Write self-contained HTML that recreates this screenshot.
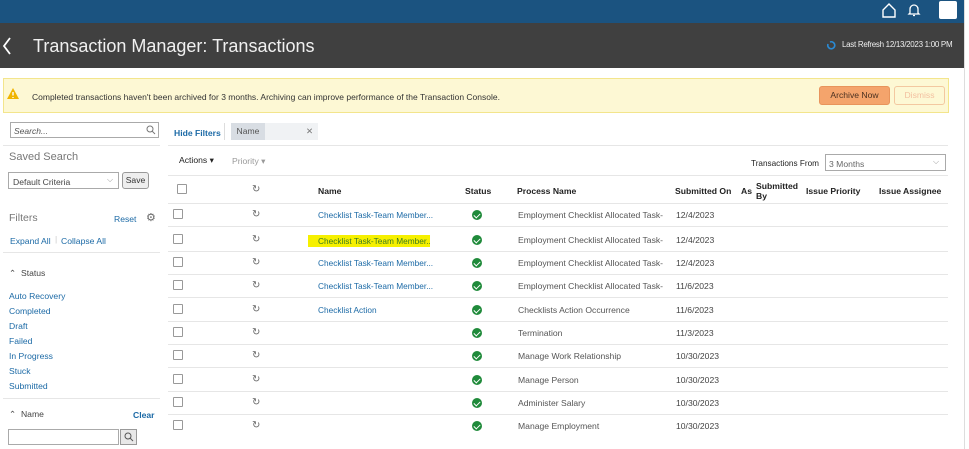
<!DOCTYPE html>
<html><head><style>
*{box-sizing:border-box;margin:0;padding:0}
body{width:969px;height:449px;overflow:hidden;background:#fff;font-family:"Liberation Sans",sans-serif;font-size:8.6px;color:#333;position:relative}
.a{position:absolute;white-space:nowrap}
.lnk{color:#1c6aa6}
.cb{position:absolute;width:10px;height:10px;border:1px solid #999;border-radius:1px;background:#fff}
.chk{position:absolute;width:10px;height:10px;border-radius:50%;background:#1f8a3a}
.chk:after{content:"";position:absolute;left:3px;top:2px;width:3px;height:5px;border:solid #fff;border-width:0 1.5px 1.5px 0;transform:rotate(45deg)}
.rl{position:absolute;left:168px;width:780px;height:1px;background:#e6e6e6}
.hd{font-weight:bold;color:#222;font-size:8.6px}
</style></head><body>
<div class="a" style="left:0;top:0;width:964px;height:23px;background:#1b5380"></div>
<div class="a" style="left:0;top:23px;width:964px;height:45px;background:#404040"></div>
<div class="a" style="left:964px;top:0;width:5px;height:449px;background:#fff;border-left:1px solid #ddd"></div>
<svg class="a" style="left:881px;top:2px" width="16" height="16" viewBox="0 0 16 16"><path d="M2 8 L8 2 L14 8 V15 H2 Z" fill="none" stroke="#fff" stroke-width="1.4"/></svg>
<svg class="a" style="left:907px;top:2px" width="14" height="16" viewBox="0 0 14 16"><path d="M3 11 V7 a4 4 0 0 1 8 0 V11 L12 12 H2 Z M6 13.5 h2" fill="none" stroke="#fff" stroke-width="1.3"/></svg>
<div class="a" style="left:939px;top:1px;width:18px;height:18px;background:#fff;border-radius:2px"></div>
<svg class="a" style="left:2px;top:37px" width="10" height="18" viewBox="0 0 10 18"><path d="M8 1 L2 9 L8 17" fill="none" stroke="#fff" stroke-width="1.8"/></svg>
<div class="a" style="left:33px;top:36px;font-size:18px;color:#f0f0f0">Transaction Manager: Transactions</div>
<svg class="a" style="left:826px;top:40px" width="10" height="10" viewBox="0 0 10 10"><path d="M2 4 a3.5 3.5 0 1 0 2-2" fill="none" stroke="#2a8ad4" stroke-width="1.6"/></svg>
<div class="a" style="left:842px;top:40px;color:#eee;font-size:8px;letter-spacing:-0.3px">Last Refresh 12/13/2023 1:00 PM</div>
<div class="a" style="left:3px;top:78px;width:946px;height:35px;background:#fdf8d4;border:1px solid #f3e58c"></div>
<svg class="a" style="left:6px;top:87px" width="14" height="13" viewBox="0 0 14 13"><path d="M7 1 L13 12 H1 Z" fill="#f0b400"/><path d="M7 5 v3.5 M7 10 v1" stroke="#fff" stroke-width="1.4"/></svg>
<div class="a" style="left:32px;top:92px;font-size:8.5px;color:#333">Completed transactions haven't been archived for 3 months. Archiving can improve performance of the Transaction Console.</div>
<div class="a" style="left:819px;top:86px;width:71px;height:19px;background:#f4a46c;border:1px solid #e8945c;border-radius:3px;text-align:center;line-height:17px;color:#4a3020">Archive Now</div>
<div class="a" style="left:894px;top:86px;width:51px;height:19px;border:1px solid #f3c8a0;border-radius:3px;text-align:center;line-height:17px;color:#f3c0a0">Dismiss</div>
<div class="a" style="left:10px;top:122px;width:149px;height:16px;border:1px solid #aaa;background:#fff"></div>
<div class="a" style="left:14px;top:126px;font-style:italic;color:#555;font-size:8.5px">Search...</div>
<svg class="a" style="left:146px;top:125px" width="10" height="10" viewBox="0 0 10 10"><circle cx="4" cy="4" r="3" fill="none" stroke="#777"/><path d="M6 6 L9 9" stroke="#777"/></svg>
<div class="a" style="left:3px;top:145px;width:157px;height:1px;background:#e6e6e6"></div>
<div class="a" style="left:9px;top:151px;font-size:11px;color:#777">Saved Search</div>
<div class="a" style="left:8px;top:172px;width:111px;height:17px;border:1px solid #aaa"></div>
<div class="a" style="left:13px;top:177px;color:#444">Default Criteria</div>
<div class="a" style="left:107px;top:175px;color:#999;font-size:8px">⌵</div>
<div class="a" style="left:122px;top:172px;width:27px;height:17px;border:1px solid #999;border-radius:3px;background:#eee;text-align:center;line-height:15px;color:#333">Save</div>
<div class="a" style="left:9px;top:212px;font-size:10.5px;color:#777">Filters</div>
<div class="a lnk" style="left:114px;top:214px">Reset</div>
<div class="a" style="left:146px;top:211px;color:#666;font-size:11px">⚙</div>
<div class="a lnk" style="left:10px;top:236px">Expand All</div>
<div class="a" style="left:55px;top:234px;color:#ccc">|</div>
<div class="a lnk" style="left:61px;top:236px">Collapse All</div>
<div class="a" style="left:3px;top:252px;width:157px;height:1px;background:#e6e6e6"></div>
<div class="a" style="left:9px;top:268px;color:#444">⌃ &nbsp;Status</div>
<div class="a lnk" style="left:9px;top:291px">Auto Recovery</div>
<div class="a lnk" style="left:9px;top:306px">Completed</div>
<div class="a lnk" style="left:9px;top:321px">Draft</div>
<div class="a lnk" style="left:9px;top:336px">Failed</div>
<div class="a lnk" style="left:9px;top:351px">In Progress</div>
<div class="a lnk" style="left:9px;top:366px">Stuck</div>
<div class="a lnk" style="left:9px;top:381px">Submitted</div>
<div class="a" style="left:3px;top:398px;width:157px;height:1px;background:#e6e6e6"></div>
<div class="a" style="left:9px;top:409px;color:#444">⌃ &nbsp;Name</div>
<div class="a lnk" style="left:133px;top:410px;font-weight:bold">Clear</div>
<div class="a" style="left:8px;top:429px;width:111px;height:16px;border:1px solid #aaa"></div>
<div class="a" style="left:120px;top:429px;width:17px;height:16px;border:1px solid #999;background:#e8e8e8"></div>
<svg class="a" style="left:124px;top:432px" width="10" height="10" viewBox="0 0 10 10"><circle cx="4" cy="4" r="3" fill="none" stroke="#555"/><path d="M6 6 L9 9" stroke="#555"/></svg>
<div class="a lnk" style="left:174px;top:128px;font-weight:bold">Hide Filters</div>
<div class="a" style="left:224px;top:123px;width:1px;height:17px;background:#ddd"></div>
<div class="a" style="left:231px;top:123px;width:87px;height:17px;background:#f0f2f4"></div>
<div class="a" style="left:231px;top:123px;width:34px;height:17px;background:#d8dde3;text-align:center;line-height:17px;color:#555">Name</div>
<div class="a" style="left:306px;top:126px;color:#777">✕</div>
<div class="a" style="left:168px;top:145px;width:780px;height:1px;background:#e6e6e6"></div>
<div class="a" style="left:179px;top:155px;color:#222">Actions ▾</div>
<div class="a" style="left:232px;top:156px;color:#999">Priority ▾</div>
<div class="a" style="left:751px;top:159px;color:#222;font-size:8.2px">Transactions From</div>
<div class="a" style="left:825px;top:154px;width:121px;height:17px;border:1px solid #aaa"></div>
<div class="a" style="left:829px;top:159px;color:#666">3 Months</div>
<div class="a" style="left:933px;top:157px;color:#999;font-size:8px">⌵</div>
<div class="rl" style="top:175px"></div>
<div class="cb" style="left:177px;top:184px"></div>
<div class="a" style="left:252px;top:184px;color:#666;font-size:10px">↻</div>
<div class="a hd" style="left:318px;top:186px">Name</div>
<div class="a hd" style="left:465px;top:186px">Status</div>
<div class="a hd" style="left:517px;top:186px">Process Name</div>
<div class="a hd" style="left:675px;top:186px">Submitted On</div>
<div class="a hd" style="left:741px;top:186px">As</div>
<div class="a hd" style="left:756px;top:181px;line-height:10px">Submitted<br>By</div>
<div class="a hd" style="left:806px;top:186px">Issue Priority</div>
<div class="a hd" style="left:879px;top:186px">Issue Assignee</div>
<div class="rl" style="top:203px"></div>
<div id="rows"></div>
<script>
var r=[["Checklist Task-Team Member...","Employment Checklist Allocated Task-","12/4/2023",1],
["Checklist Task-Team Member...","Employment Checklist Allocated Task-","12/4/2023",1,1],
["Checklist Task-Team Member...","Employment Checklist Allocated Task-","12/4/2023",1],
["Checklist Task-Team Member...","Employment Checklist Allocated Task-","11/6/2023",1],
["Checklist Action","Checklists Action Occurrence","11/6/2023",1],
["","Termination","11/3/2023"],["","Manage Work Relationship","10/30/2023"],
["","Manage Person","10/30/2023"],["","Administer Salary","10/30/2023"],["","Manage Employment","10/30/2023"]];
var ys=[215,240,263,286,310,333,356,380,403,426],h="";
r.forEach(function(x,i){var y=ys[i];
h+='<div class="cb" style="left:173px;top:'+(y-6)+'px"></div><div class="a" style="left:252px;top:'+(y-6)+'px;color:#666;font-size:10px">↻</div>';
if(x[0])h+='<div class="a lnk" style="left:318px;top:'+(y-5)+'px;font-size:8.3px;'+(x[4]?'background:#f6f000;color:#3a7a20;padding:1px 0 1px 10px;margin-left:-10px;width:122px;overflow:hidden':'')+'">'+x[0]+'</div>';
h+='<div class="chk" style="left:472px;top:'+(y-5)+'px"></div><div class="a" style="left:518px;top:'+(y-5)+'px;color:#555;width:148px;overflow:hidden">'+x[1]+'</div><div class="a" style="left:676px;top:'+(y-5)+'px;color:#444">'+x[2]+'</div>';
if(i<9)h+='<div class="rl" style="top:'+(y+11)+'px"></div>';});
document.getElementById('rows').innerHTML=h;
</script>
</body></html>
